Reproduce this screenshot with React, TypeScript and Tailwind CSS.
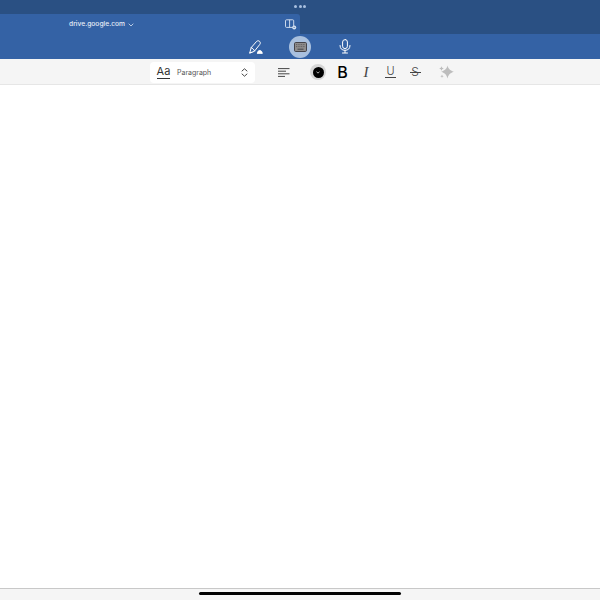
import React from "react";

const Pencil = () => (
  <svg width="14" height="14" viewBox="0 0 14 14" fill="none" stroke="#fff" strokeWidth="1" strokeLinejoin="round" strokeLinecap="round">
    <path d="M0.8 12.8 L2.2 7.6 L7.6 1.4 C8.6 0.5 10 0.6 10.8 1.6 C11.5 2.5 11.4 3.6 10.8 4.4 L5.6 11 Z" />
    <path d="M2.2 7.6 C3.6 8 4.8 9.4 5.6 11" />
    <path d="M0.8 12.8 L3 12.2" />
    <path d="M8.4 13.3 C8.4 11.6 9.4 10.6 10.8 10.6 C12.2 10.6 13.2 11.6 13.2 13.3 Z" fill="#fff" />
  </svg>
);

const Keyboard = () => (
  <svg width="13" height="10" viewBox="0 0 13 10" fill="none">
    <rect x="0.5" y="0.5" width="12" height="9" rx="1.2" fill="#8f8d8c" stroke="#45444a" />
    <path d="M2 2.6h9M2 4.6h9" stroke="#5c5a5c" strokeWidth="0.9" strokeDasharray="1 0.7" />
    <path d="M3.5 7.2h6" stroke="#45444a" strokeWidth="1" />
  </svg>
);

const Mic = () => (
  <svg width="12" height="15" viewBox="0 0 12 15" fill="none" stroke="#fff" strokeWidth="1" strokeLinecap="round">
    <rect x="3.6" y="0.6" width="4.8" height="9" rx="2.4" />
    <path d="M1 6.5 C1 9.8 3 11.3 6 11.3 C9 11.3 11 9.8 11 6.5" />
    <path d="M6 11.3 V13.6 M3.5 14 H8.5" />
  </svg>
);

const SplitView = () => (
  <svg width="12" height="11" viewBox="0 0 12 11" fill="none">
    <rect x="0.5" y="0.8" width="8.2" height="7.6" rx="1" stroke="#dbe5f3" strokeWidth="0.9" />
    <path d="M4.6 0.8 V8.4" stroke="#dbe5f3" strokeWidth="0.9" />
    <circle cx="9.2" cy="8.4" r="2" fill="#dbe5f3" />
    <path d="M8.3 8.4 H10.1" stroke="#3462a5" strokeWidth="0.6" />
  </svg>
);

const AlignLeft = () => (
  <svg width="12" height="9" viewBox="0 0 12 9" stroke="#333" strokeWidth="0.9">
    <path d="M0 0.6 H11.5 M0 3.2 H8 M0 5.8 H11.5 M0 8.4 H7" />
  </svg>
);

const UpDown = () => (
  <svg width="7" height="9" viewBox="0 0 7 9" fill="none" stroke="#333" strokeWidth="0.9" strokeLinecap="round" strokeLinejoin="round">
    <path d="M1 3 L3.5 0.8 L6 3 M1 6 L3.5 8.2 L6 6" />
  </svg>
);

const Sparkle = () => (
  <svg width="15" height="14" viewBox="0 0 15 14" fill="#bdbdbd">
    <path d="M8.5 0.5 C9.4 3.8 10.8 5.2 14.8 6.8 C10.8 8.4 9.4 9.8 8.5 13.5 C7.6 9.8 6.2 8.4 2.2 6.8 C6.2 5.2 7.6 3.8 8.5 0.5 Z" />
    <path d="M2.5 1.2 L3.2 2.8 L4.8 3.5 L3.2 4.2 L2.5 5.8 L1.8 4.2 L0.2 3.5 L1.8 2.8 Z" />
    <path d="M3 9.5 L3.5 10.7 L4.7 11.2 L3.5 11.7 L3 12.9 L2.5 11.7 L1.3 11.2 L2.5 10.7 Z" />
  </svg>
);

export default function App() {
  const font = "font-['Inter','Liberation_Sans',sans-serif]";
  return (
    <div className={`w-[600px] h-[600px] flex flex-col bg-white overflow-hidden ${font}`}>
      {/* Window handle */}
      <div className="h-[14px] shrink-0 bg-[#2a5083] flex items-center justify-center gap-[1.5px] pb-[1px]">
        <span className="w-[3px] h-[3px] rounded-full bg-[#a9c0e0]" />
        <span className="w-[3px] h-[3px] rounded-full bg-[#a9c0e0]" />
        <span className="w-[3px] h-[3px] rounded-full bg-[#a9c0e0]" />
      </div>

      {/* Address row */}
      <div className="h-[20px] shrink-0 bg-[#2a5083] flex">
        <div className="w-[300px] bg-[#3462a5] rounded-tr-[3px] flex items-center pl-[69px] pr-[3px] pt-[1px]">
          <span className="text-[6.7px] font-medium text-[#e6edf7] leading-none">drive.google.com</span>
          <svg className="ml-[3px]" width="6" height="4" viewBox="0 0 6 4" fill="none" stroke="#dbe5f3" strokeWidth="0.8">
            <path d="M0.7 0.7 L3 3 L5.3 0.7" />
          </svg>
          <span className="ml-auto flex"><SplitView /></span>
        </div>
      </div>

      {/* Input mode row */}
      <div className="h-[25px] shrink-0 bg-[#3462a5] flex items-center justify-center pr-[1px]">
        <div className="w-[16px] flex justify-center"><Pencil /></div>
        <div className="ml-[25px] w-[22px] h-[22px] rounded-full bg-[#a9c0de] flex items-center justify-center"><Keyboard /></div>
        <div className="ml-[28px] w-[12px] flex justify-center"><Mic /></div>
      </div>

      {/* Format bar */}
      <div className="h-[26px] shrink-0 bg-[#f5f5f5] border-b border-[#e6e6e6] flex items-center pl-[150px] pt-[1px]">
        <div className="w-[105px] h-[21px] bg-white rounded-[4px] flex items-center pl-[7px] pr-[7px]">
          <span className="text-[11px] leading-none text-[#333] border-b border-[#333] pb-[1px] w-[13px] flex justify-center">Aa</span>
          <span className="ml-[7px] text-[7px] leading-none text-[#555]">Paragraph</span>
          <span className="ml-auto flex"><UpDown /></span>
        </div>
        <div className="ml-[23px] flex"><AlignLeft /></div>
        <div className="ml-[20px] w-[16px] h-[16px] rounded-full bg-[#d6d6d6] flex items-center justify-center">
          <div className="w-[11px] h-[11px] rounded-full bg-black flex items-center justify-center">
            <svg width="4" height="3" viewBox="0 0 4 3" fill="none" stroke="#fff" strokeWidth="0.7"><path d="M0.5 0.6 L2 2.2 L3.5 0.6" /></svg>
          </div>
        </div>
        <span className="ml-[11px] w-[11px] text-center text-[16px] font-medium leading-none text-black">B</span>
        <span className="ml-[13px] w-[10px] text-center text-[15px] leading-none text-[#444] italic font-['Liberation_Serif',serif]">I</span>
        <span className="ml-[14px] w-[11px] text-center text-[11px] font-light leading-[11px] text-[#444] border-b border-[#444]">U</span>
        <span className="ml-[14px] w-[10px] relative text-center text-[12px] font-light leading-none text-[#444]">
          S
          <span className="absolute -left-[0.5px] -right-[0.5px] top-[6px] h-px bg-[#444]" />
        </span>
        <span className="ml-[19px] flex"><Sparkle /></span>
      </div>

      {/* Document */}
      <div className="flex-1 bg-white" />

      {/* Home indicator */}
      <div className="h-[12px] shrink-0 bg-[#f5f5f5] border-t border-[#c8c8c8] flex justify-center pt-[3px]">
        <div className="w-[202px] h-[3px] rounded-full bg-black" />
      </div>
    </div>
  );
}
